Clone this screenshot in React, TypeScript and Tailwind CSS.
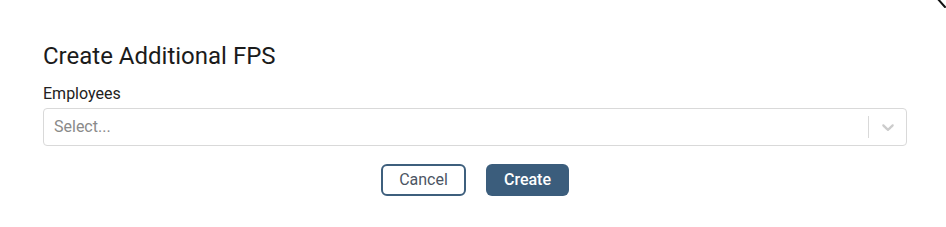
export default function App() {
  return (
    <div className="relative w-[946px] h-[227px] bg-white font-['Roboto',sans-serif]">
      <svg
        className="absolute right-0 top-0"
        width="10"
        height="10"
        viewBox="0 0 10 10"
      >
        <path d="M1 -2 L9 7" stroke="#111" strokeWidth="2" strokeLinecap="round" />
      </svg>
      <div className="pl-[43px] pr-[39px] pt-[40px]">
        <h2 className="text-2xl leading-8 text-[#1b1b1b] font-normal">
          Create Additional FPS
        </h2>
        <label className="mt-[10px] block text-base leading-6 text-[#222]">
          Employees
        </label>
        <div className="mt-[2px] flex h-[38px] items-center rounded border border-[#d9d9d9] bg-white">
          <div className="flex-1 pl-[10px] text-base text-[#8a8a8a]">
            Select...
          </div>
          <span className="h-[22px] w-px bg-[#d9d9d9]"></span>
          <div className="flex w-[37px] items-center justify-center">
            <svg width="20" height="20" viewBox="0 0 20 20" fill="#cccccc">
              <path d="M4.516 7.548c0.436-0.446 1.043-0.481 1.576 0l3.908 3.747 3.908-3.747c0.533-0.481 1.141-0.446 1.574 0 0.436 0.445 0.408 1.197 0 1.615-0.406 0.418-4.695 4.502-4.695 4.502-0.217 0.223-0.502 0.335-0.787 0.335s-0.57-0.112-0.789-0.335c0 0-4.287-4.084-4.695-4.502s-0.436-1.17 0-1.615z" />
            </svg>
          </div>
        </div>
        <div className="mt-[18px] flex justify-center gap-5">
          <button className="h-8 w-[85px] rounded-md border-2 border-[#3e5f7d] bg-white text-base text-[#4b5563]">
            Cancel
          </button>
          <button className="h-8 w-[83px] rounded-md bg-[#3b5d7c] text-base font-medium text-white">
            Create
          </button>
        </div>
      </div>
    </div>
  );
}
